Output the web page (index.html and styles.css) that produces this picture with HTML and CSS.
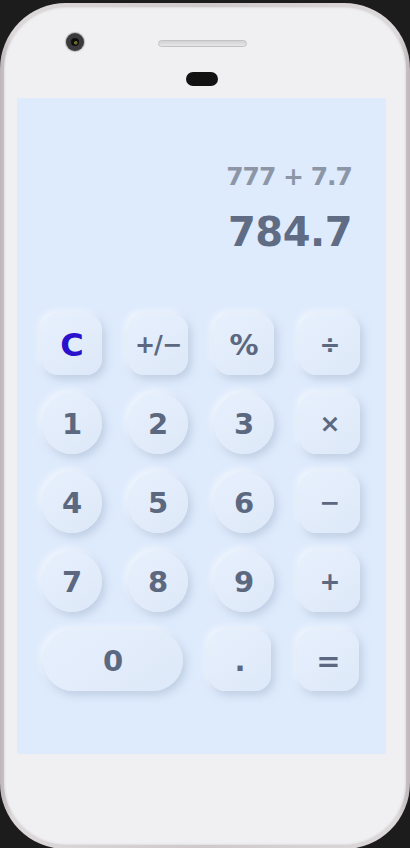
FILE: index.html
```html
<!DOCTYPE html>
<html>
<head>
<meta charset="utf-8">
<link rel="stylesheet" href="styles.css">
</head>
<body>
<div class="phone">
  <div class="face">
    <div class="hardware">
      <span class="camera"><span class="lens"></span></span>
      <span class="speaker"></span>
      <span class="sensor"></span>
    </div>
    <div class="screen">
      <div class="display">
        <div class="expr">777 + 7.7</div>
        <div class="result">784.7</div>
      </div>
      <div class="keys">
        <button class="key sq clear">C</button>
        <button class="key sq small">+/&minus;</button>
        <button class="key sq">%</button>
        <button class="key sq op">&divide;</button>
        <button class="key rd">1</button>
        <button class="key rd">2</button>
        <button class="key rd">3</button>
        <button class="key sq op">&times;</button>
        <button class="key rd">4</button>
        <button class="key rd">5</button>
        <button class="key rd">6</button>
        <button class="key sq op">&minus;</button>
        <button class="key rd">7</button>
        <button class="key rd">8</button>
        <button class="key rd">9</button>
        <button class="key sq op">+</button>
      </div>
      <div class="lastrow">
        <button class="key pill">0</button>
        <button class="key sq dot">.</button>
        <button class="key sq eq">=</button>
      </div>
    </div>
  </div>
</div>
</body>
</html>
```
FILE: styles.css
```css
html, body {
  margin: 0;
  padding: 0;
  background: #1c1c1c;
  width: 410px;
  height: 848px;
  overflow: hidden;
}
.phone {
  margin-top: 3px;
  width: 410px;
  height: 846px;
  box-sizing: border-box;
  border-radius: 66px;
  background: linear-gradient(90deg, #bdb5b9, #ddd8da 3%, #cfc9cc 50%, #ddd8da 97%, #bdb5b9);
  padding: 4px;
}
.face {
  position: relative;
  height: 100%;
  box-sizing: border-box;
  border-radius: 62px;
  background: #f0f0f2;
  padding: 91px 0 0 13px;
  box-shadow: inset 0 0 3px rgba(0,0,0,0.15);
}
.hardware .camera {
  position: absolute;
  left: 62px;
  top: 26px;
  width: 18px;
  height: 18px;
  border-radius: 50%;
  background: #3a3a3c;
  box-shadow: 0 0 1px 1px rgba(0,0,0,0.25);
}
.hardware .lens {
  position: absolute;
  left: 5px;
  top: 5px;
  width: 8px;
  height: 8px;
  border-radius: 50%;
  background: radial-gradient(circle at 60% 60%, #6b6a2a 0 1.5px, #0e0e0e 2px);
}
.hardware .speaker {
  position: absolute;
  left: 154px;
  top: 33px;
  width: 89px;
  height: 7px;
  border-radius: 4px;
  background: linear-gradient(#d2d2d4, #e6e6e8);
  border: 1px solid #c2c2c4;
  box-sizing: border-box;
}
.hardware .sensor {
  position: absolute;
  left: 182px;
  top: 65px;
  width: 32px;
  height: 14px;
  border-radius: 7px;
  background: #121212;
}
.screen {
  width: 369px;
  height: 656px;
  background: #deebfd;
  box-sizing: border-box;
  padding: 0 34px 0 25px;
  font-family: "DejaVu Sans", sans-serif;
}
.display {
  text-align: right;
  padding-top: 64px;
  height: 216px;
  box-sizing: border-box;
}
.expr {
  font-size: 25px;
  font-weight: 600;
  color: #8d96a7;
  line-height: 30px;
  letter-spacing: -1px;
}
.result {
  font-size: 40px;
  font-weight: 700;
  color: #5f6c83;
  line-height: 48px;
  margin-top: 16px;
  letter-spacing: -0.5px;
}
.keys {
  display: grid;
  grid-template-columns: repeat(4, 60px);
  grid-auto-rows: 61px;
  column-gap: 26px;
  row-gap: 18px;
}
.key {
  border: none;
  padding: 0;
  margin: 0;
  flex: none;
  font-family: "DejaVu Sans", sans-serif;
  font-size: 29px;
  font-weight: 600;
  color: #5b6880;
  background: linear-gradient(145deg, #e7f0fd, #dde8f8);
  box-shadow: 3px 4px 8px rgba(160, 176, 200, 0.5), -3px -3px 7px rgba(255, 255, 255, 0.65);
  display: flex;
  align-items: center;
  justify-content: center;
}
.sq { border-radius: 16px; }
.rd { border-radius: 50%; }
.clear { color: #2a12cc; font-size: 32px; }
.small { font-size: 24px; letter-spacing: -1px; }
.op { font-size: 25px; }
.lastrow {
  display: flex;
  margin-top: 18px;
  height: 61px;
  padding-left: 1px;
}
.pill {
  width: 140px;
  border-radius: 31px;
}
.dot {
  width: 62px;
  margin-left: 26px;
}
.eq {
  width: 61px;
  margin-left: 27px;
}
```
